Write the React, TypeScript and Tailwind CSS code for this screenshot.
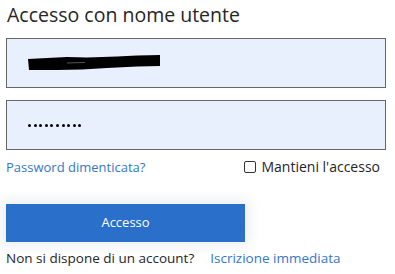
export default function App() {
  return (
    <div className="h-[274px] w-[395px] overflow-hidden bg-white px-[6px] pt-[2px] font-['Open_Sans',sans-serif] text-[#1b1b1b]">
      <h1 className="pl-[1px] text-[19.5px] leading-[25px] text-[#262626]">Accesso con nome utente</h1>

      <div className="mt-[11px] flex h-[50px] w-[380px] items-center border border-[#666] bg-[#e8f0fe] pl-[20px]">
        <svg width="136" height="18" viewBox="0 0 136 18">
          <path
            d="M1 5 L20 4 L40 3 L60 3.5 L90 2.5 L110 1.5 L133 1 L133 12 L110 12.5 L80 14 L55 15.5 L30 16 L2 16 Z"
            fill="#000"
          />
          <path d="M40 9 L58 8.5" stroke="#555" strokeWidth="1" />
        </svg>
      </div>

      <div className="mt-[12px] flex h-[50px] w-[380px] items-center border border-[#666] bg-[#e8f0fe] pl-[21px]">
        <div className="flex gap-[2.6px]">
          {Array.from({ length: 10 }).map((_, i) => (
            <span key={i} className="h-[3px] w-[3px] rounded-full bg-black" />
          ))}
        </div>
      </div>

      <div className="mt-[8px] flex w-[380px] items-center justify-between text-[13px] leading-[18px]">
        <span className="text-[#3477c8]">Password dimenticata?</span>
        <label className="flex items-center gap-[5px] pr-[6px] text-[14px] text-[#262626]">
          <span className="h-[12px] w-[12px] rounded-[2px] border border-[#333] bg-white" />
          Mantieni l'accesso
        </label>
      </div>

      <button className="mt-[28px] flex h-[38px] w-[239px] items-center justify-center bg-[#2a6fc9] text-[13px] text-white shadow-[0_0_12px_4px_rgba(200,205,220,0.35)]">
        Accesso
      </button>

      <div className="mt-[7px] flex text-[13.5px] leading-[18px]">
        <span className="text-[#262626]">Non si dispone di un account?</span>
        <span className="ml-[16px] text-[#3477c8]">Iscrizione immediata</span>
      </div>
    </div>
  )
}
